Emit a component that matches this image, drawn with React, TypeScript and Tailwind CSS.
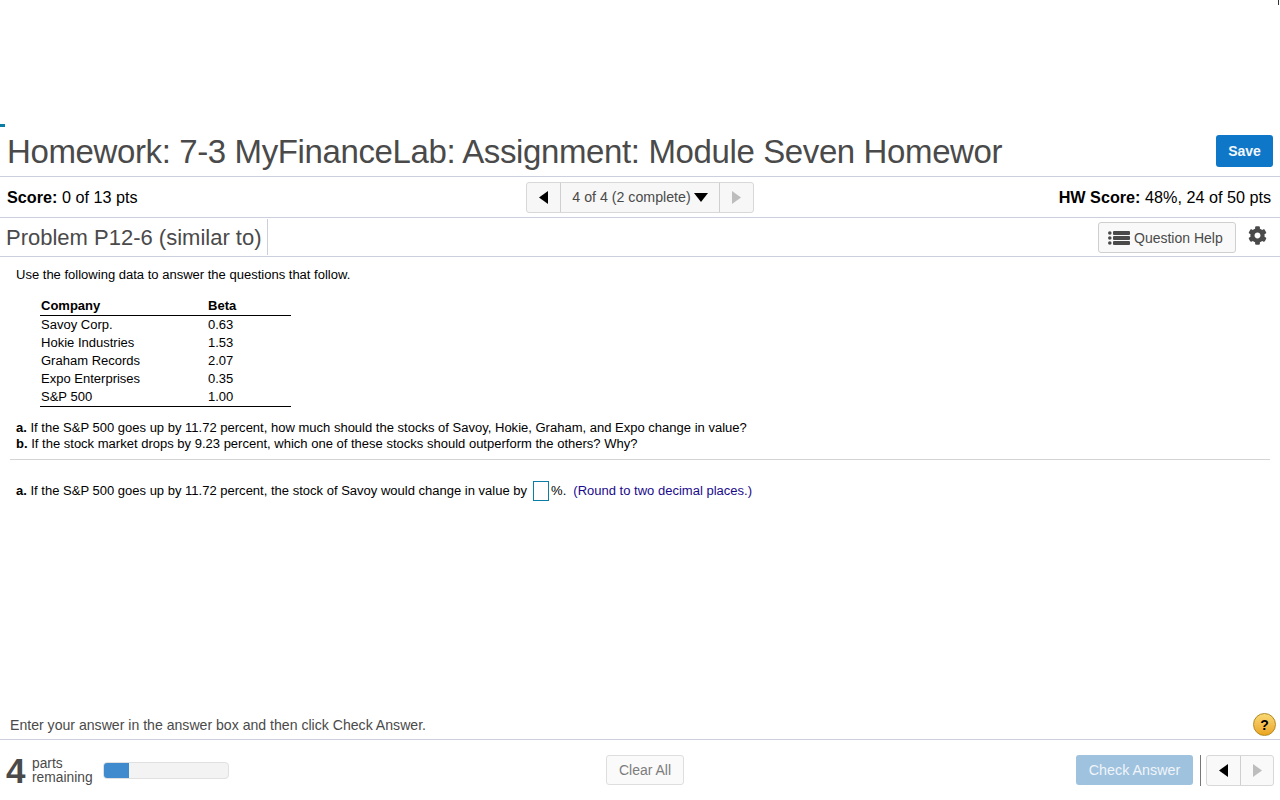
import { FaCog } from "react-icons/fa";

const rows = [
  { name: "Savoy Corp.", beta: "0.63" },
  { name: "Hokie Industries", beta: "1.53" },
  { name: "Graham Records", beta: "2.07" },
  { name: "Expo Enterprises", beta: "0.35" },
  { name: "S&P 500", beta: "1.00" },
];

function ArrowLeft({ color = "#000" }: { color?: string }) {
  return (
    <svg width="9" height="13" viewBox="0 0 9 13">
      <path d="M9 0 V13 L0 6.5 Z" fill={color} />
    </svg>
  );
}

function ArrowRight({ color = "#bdbdbd" }: { color?: string }) {
  return (
    <svg width="9" height="13" viewBox="0 0 9 13">
      <path d="M0 0 V13 L9 6.5 Z" fill={color} />
    </svg>
  );
}

// dots plus thick bars, as on the help button
function ListIcon() {
  return (
    <svg width="22" height="14" viewBox="0 0 22 14" fill="#4a4a4a">
      <circle cx="1.8" cy="2" r="1.8" />
      <circle cx="1.8" cy="7" r="1.8" />
      <circle cx="1.8" cy="12" r="1.8" />
      <rect x="5" y="0" width="17" height="4" rx="1" />
      <rect x="5" y="5" width="17" height="4" rx="1" />
      <rect x="5" y="10" width="17" height="4" rx="1" />
    </svg>
  );
}

export default function App() {
  return (
    <div className="flex h-[800px] w-[1280px] flex-col overflow-hidden bg-white font-['Liberation_Sans',Arial,sans-serif] text-[#4a4a4a]">
      {/* Blank area above the player */}
      <div className="flex h-[124px] shrink-0 justify-end">
        <div className="mr-px h-[5px] w-px bg-[#333]" />
      </div>
      <div className="h-[3px] w-[5px] shrink-0 bg-[#0a7ea4]" />

      {/* Title */}
      <div className="flex h-[50px] shrink-0 items-center justify-between border-b border-[#ccd0de] pr-[7px] pl-[7px]">
        <div className="text-[33px] leading-[46px] tracking-[-0.38px] whitespace-nowrap">
          Homework: 7-3 MyFinanceLab: Assignment: Module Seven Homewor
        </div>
        <button className="mb-[1px] h-[32px] w-[57px] rounded-[3px] bg-[#0f77c8] text-sm font-bold text-[#f2f7fb]">
          Save
        </button>
      </div>

      {/* Score row */}
      <div className="flex h-[41px] shrink-0 items-center justify-between border-b border-[#ccd0de] pr-[9px] pl-[7px] text-[16.2px] text-black">
        <div className="w-[302px] pt-px">
          <span className="font-bold">Score:</span> 0 of 13 pts
        </div>
        <div className="flex h-[31px] items-stretch rounded-[3px] border border-[#d8d8d8] bg-[#f7f7f7]">
          <div className="flex w-[34px] items-center justify-center border-r border-[#cfcfcf]">
            <ArrowLeft />
          </div>
          <div className="flex w-[159px] items-center justify-center gap-[3px] border-r border-[#cfcfcf] pt-px text-[14.2px] text-[#4a4a4a]">
            4 of 4 (2 complete)
            <svg width="14" height="9" viewBox="0 0 14 9">
              <path d="M0 0 H14 L7 9 Z" fill="#000" />
            </svg>
          </div>
          <div className="flex w-[33px] items-center justify-center">
            <ArrowRight />
          </div>
        </div>
        <div className="w-[300px] pt-px text-right">
          <span className="font-bold">HW Score:</span> 48%, 24 of 50 pts
        </div>
      </div>

      {/* Problem row */}
      <div className="flex h-[39px] shrink-0 items-center justify-between border-b border-[#ccd0de] pr-[13px] pl-[6px]">
        <div className="flex h-[36px] items-center border-r border-[#ccd0de] pr-[5px] text-[22px]">
          Problem P12-6 (similar to)
        </div>
        <div className="flex items-center gap-[12px]">
          <button className="flex h-[31px] w-[138px] items-center gap-[4px] rounded-[3px] border border-[#cfcfcf] bg-[#f9f9f9] pt-px pl-[9px] text-sm">
            <ListIcon />
            Question Help
          </button>
          <FaCog size={19} color="#4a4a4a" className="mb-[3px]" />
        </div>
      </div>

      {/* Question */}
      <div className="flex min-h-0 flex-1 flex-col text-[13.03px] text-black">
        <div className="mx-[10px] border-b border-[#d4d4d4] pb-[7px]">
          <p className="mt-[10px] ml-[6px] leading-[16px]">Use the following data to answer the questions that follow.</p>
          <table className="mt-[14px] ml-[30px] w-[251px] border-b border-black leading-[18px]">
            <thead>
              <tr className="border-b border-black font-bold">
                <th className="pl-px text-left font-bold">Company</th>
                <th className="w-[83px] text-left font-bold">Beta</th>
              </tr>
            </thead>
            <tbody>
              {rows.map((r) => (
                <tr key={r.name}>
                  <td className="pl-px">{r.name}</td>
                  <td>{r.beta}</td>
                </tr>
              ))}
            </tbody>
          </table>
          <p className="mt-[13px] ml-[6px] leading-[16px]">
            <b>a.</b> If the S&amp;P 500 goes up by 11.72 percent, how much should the stocks of Savoy, Hokie, Graham, and Expo change in value?
          </p>
          <p className="ml-[6px] leading-[16px]">
            <b>b.</b> If the stock market drops by 9.23 percent, which one of these stocks should outperform the others? Why?
          </p>
        </div>
        <div className="mt-[21px] ml-[16px] flex items-center">
          <span>
            <b>a.</b> If the S&amp;P 500 goes up by 11.72 percent, the stock of Savoy would change in value by
          </span>
          <span className="mr-[2px] ml-[6px] h-[20px] w-[16px] border border-[#0a7ea4]" />
          <span>%.</span>
          <span className="ml-[7px] text-[#1a0a8c]">(Round to two decimal places.)</span>
        </div>
      </div>

      {/* Footer hint */}
      <div className="flex h-[31px] shrink-0 items-center justify-between border-b border-[#ccd0de] pr-[4px] pl-[10px] text-[14.1px]">
        <span className="pt-[4px]">Enter your answer in the answer box and then click Check Answer.</span>
        <div className="mt-px flex h-[23px] w-[23px] items-center justify-center rounded-full border border-[#b08a20] bg-linear-to-b from-[#f9d873] to-[#eba51c] text-sm font-bold text-black">
          ?
        </div>
      </div>

      {/* Footer controls */}
      <div className="flex h-[60px] shrink-0 items-center pr-[6px] pl-[6px]">
        <div className="w-[26px] text-[35px] leading-none font-bold">4</div>
        <div className="w-[71px] pt-[2px] text-[13.8px] leading-[14px]">
          parts
          <br />
          remaining
        </div>
        <div className="h-[17px] w-[126px] overflow-hidden rounded-[4px] border border-[#e0e0e0] bg-[#f3f3f3]">
          <div className="h-full w-[25px] bg-[#3f8bcd]" />
        </div>
        <button className="ml-[377px] h-[30px] w-[78px] rounded-[3px] border border-[#dedede] bg-[#fafafa] text-sm text-[#7d7d7d]">
          Clear All
        </button>
        <button className="ml-auto h-[30px] w-[117px] rounded-[3px] bg-[#9fc2de] pt-px text-[14.3px] text-[#f0f5fa]">
          Check Answer
        </button>
        <div className="mr-[5px] ml-[7px] h-[31px] w-px bg-[#777]" />
        <div className="flex h-[31px] w-[68px] items-stretch rounded-[3px] border border-[#d8d8d8] bg-[#f9f9f9]">
          <div className="flex w-[34px] items-center justify-center border-r border-[#cfcfcf]">
            <ArrowLeft />
          </div>
          <div className="flex flex-1 items-center justify-center">
            <ArrowRight />
          </div>
        </div>
      </div>
    </div>
  );
}
